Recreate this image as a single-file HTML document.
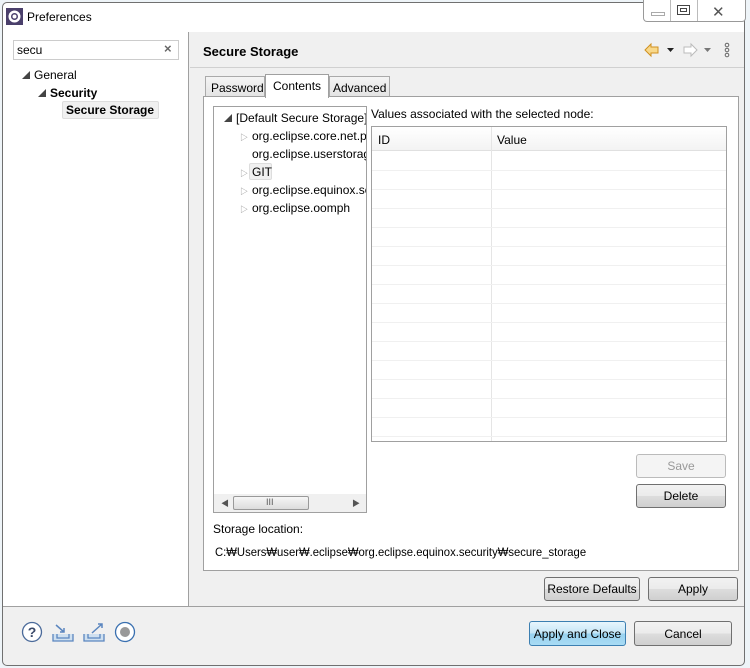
<!DOCTYPE html>
<html><head><meta charset="utf-8"><style>
*{box-sizing:border-box;margin:0;padding:0}
body{width:750px;height:668px;background:#eef4f8;font-family:"Liberation Sans","Noto Sans CJK KR",sans-serif;font-size:12px;color:#000;position:relative;overflow:hidden}
.a{position:absolute}
.btn{position:absolute;border:1px solid #707070;border-radius:3px;background:linear-gradient(#f2f2f2,#ebebeb 50%,#dddddd 51%,#cfcfcf);text-align:center;font-size:12px;line-height:22px}
.t{position:absolute;white-space:nowrap;margin-top:1px}
.row{position:absolute;left:0;right:0;height:1px;background:#f0f0f0}
</style></head><body>
<div class="a" style="left:2px;top:2px;width:743px;height:664px;background:#f0f0f0;border:1px solid #707070;border-radius:5px"></div>
<div class="a" style="left:3px;top:3px;width:741px;height:29px;background:#fff;border-radius:5px 5px 0 0"></div>
<svg class="a" style="left:6px;top:8px" width="17" height="17"><rect x="0" y="0" width="17" height="17" fill="#4a3f6b"/><circle cx="8.5" cy="8.5" r="6" fill="#fff"/><circle cx="8.5" cy="8.5" r="3.5" fill="#4a3f6b"/><circle cx="8.5" cy="8.5" r="2" fill="#fff"/></svg>
<div class="t" style="left:27px;top:9px;font-size:12px">Preferences</div>
<div class="a" style="left:643px;top:0;width:103px;height:22px;border:1px solid #999;border-top:none;border-radius:0 0 4px 4px;background:#fff"></div>
<div class="a" style="left:670px;top:0;width:1px;height:21px;background:#bbb"></div>
<div class="a" style="left:697px;top:0;width:1px;height:21px;background:#bbb"></div>
<div class="a" style="left:651px;top:12px;width:14px;height:4px;border:1px solid #aaa"></div>
<div class="a" style="left:677px;top:5px;width:13px;height:10px;border:1px solid #444"><div class="a" style="left:2px;top:2px;width:7px;height:4px;border:1px solid #444"></div></div>
<div class="t" style="left:712px;top:2px;font-size:15px;color:#555">✕</div>
<div class="a" style="left:3px;top:32px;width:186px;height:574px;background:#fff;border-right:1px solid #a0a0a0"></div>
<div class="a" style="left:13px;top:40px;width:166px;height:20px;border:1px solid #ccc;background:#fff"></div>
<div class="t" style="left:17px;top:42px">secu</div>
<div class="t" style="left:164px;top:40px;font-size:13px;color:#666;font-weight:bold">×</div>
<div class="t" style="left:22px;top:69px;font-size:8px;color:#444">◢</div>
<div class="t" style="left:34px;top:67px">General</div>
<div class="t" style="left:38px;top:87px;font-size:8px;color:#444">◢</div>
<div class="t" style="left:50px;top:85px;font-weight:bold">Security</div>
<div class="a" style="left:62px;top:101px;width:97px;height:18px;background:#f0f0f0;border:1px solid #ddd;border-radius:2px"></div>
<div class="t" style="left:66px;top:102px;font-weight:bold">Secure Storage</div>
<div class="a" style="left:190px;top:67px;width:554px;height:1px;background:#d0d0d0"></div>
<div class="t" style="left:203px;top:43px;font-size:13px;font-weight:bold">Secure Storage</div>
<svg class="a" style="left:643px;top:42px" width="95" height="16"><path d="M2 8 L8 2 V5 H15 V11 H8 V14 Z" fill="#f8d88a" stroke="#d09020"/><path d="M24 6 h7 l-3.5 4z" fill="#222"/><path d="M54 8 L48 2 V5 H41 V11 H48 V14 Z" fill="#fff" stroke="#bbb"/><path d="M61 6 h7 l-3.5 4z" fill="#777"/><circle cx="84" cy="3" r="1.8" fill="none" stroke="#666"/><circle cx="84" cy="8" r="1.8" fill="none" stroke="#666"/><circle cx="84" cy="13" r="1.8" fill="none" stroke="#666"/></svg>
<div class="a" style="left:205px;top:76px;width:60px;height:21px;border:1px solid #aaa;background:linear-gradient(#f4f4f4,#e4e4e4)"></div>
<div class="t" style="left:211px;top:80px">Password</div>
<div class="a" style="left:329px;top:76px;width:61px;height:21px;border:1px solid #aaa;background:linear-gradient(#f4f4f4,#e4e4e4)"></div>
<div class="t" style="left:333px;top:80px">Advanced</div>
<div class="a" style="left:203px;top:96px;width:536px;height:475px;border:1px solid #a0a0a0;background:#fff"></div>
<div class="a" style="left:265px;top:74px;width:64px;height:24px;border:1px solid #a0a0a0;border-bottom:none;background:#fff"></div>
<div class="t" style="left:273px;top:78px">Contents</div>
<div class="a" style="left:213px;top:106px;width:154px;height:407px;border:1px solid #a0a0a0;background:#fff;overflow:hidden">
<div class="t" style="left:10px;top:5px;font-size:8px;color:#444">◢</div>
<div class="t" style="left:22px;top:3px">[Default Secure Storage]</div>
<div class="t" style="left:26px;top:24px;font-size:8px;color:#888">▷</div>
<div class="t" style="left:38px;top:21px">org.eclipse.core.net.proxy</div>
<div class="t" style="left:38px;top:39px">org.eclipse.userstorage</div>
<div class="a" style="left:35px;top:56px;width:23px;height:17px;background:#f0f0f0;border:1px solid #ddd;border-radius:2px"></div>
<div class="t" style="left:26px;top:60px;font-size:8px;color:#888">▷</div>
<div class="t" style="left:38px;top:57px">GIT</div>
<div class="t" style="left:26px;top:78px;font-size:8px;color:#888">▷</div>
<div class="t" style="left:38px;top:75px">org.eclipse.equinox.secure</div>
<div class="t" style="left:26px;top:96px;font-size:8px;color:#888">▷</div>
<div class="t" style="left:38px;top:93px">org.eclipse.oomph</div>
<div class="a" style="left:0;top:387px;width:152px;height:18px;background:#f0f0f0"></div>
<div class="t" style="left:7px;top:390px;font-size:8px;color:#555">◀</div>
<div class="a" style="left:19px;top:389px;width:76px;height:14px;border:1px solid #999;border-radius:2px;background:linear-gradient(#f6f6f6,#dcdcdc)"></div>
<div class="t" style="left:52px;top:389px;font-size:9px;color:#555">III</div>
<div class="t" style="left:138px;top:390px;font-size:8px;color:#555">▶</div>
</div>
<div class="t" style="left:371px;top:106px">Values associated with the selected node:</div>
<div class="a" style="left:371px;top:126px;width:356px;height:316px;border:1px solid #a0a0a0;background:#fff;overflow:hidden">
<div class="a" style="left:0;top:0;width:354px;height:24px;background:linear-gradient(#fff,#f3f3f3);border-bottom:1px solid #e0e0e0"></div>
<div class="a" style="left:119px;top:0;width:1px;height:316px;background:#e5e5e5"></div>
<div class="t" style="left:6px;top:5px">ID</div>
<div class="t" style="left:125px;top:5px">Value</div>
<div class="row" style="top:43px"></div><div class="row" style="top:62px"></div><div class="row" style="top:81px"></div><div class="row" style="top:100px"></div><div class="row" style="top:119px"></div><div class="row" style="top:138px"></div><div class="row" style="top:157px"></div><div class="row" style="top:176px"></div><div class="row" style="top:195px"></div><div class="row" style="top:214px"></div><div class="row" style="top:233px"></div><div class="row" style="top:252px"></div><div class="row" style="top:271px"></div><div class="row" style="top:290px"></div><div class="row" style="top:309px"></div>
</div>
<div class="btn" style="left:636px;top:454px;width:90px;height:24px;border-color:#bbb;background:#f4f4f4;color:#999">Save</div>
<div class="btn" style="left:636px;top:484px;width:90px;height:24px">Delete</div>
<div class="t" style="left:213px;top:521px">Storage location:</div>
<div class="t" style="left:215px;top:544px;transform:scaleX(0.94);transform-origin:0 0">C:₩Users₩user₩.eclipse₩org.eclipse.equinox.security₩secure_storage</div>
<div class="btn" style="left:544px;top:577px;width:96px;height:24px">Restore Defaults</div>
<div class="btn" style="left:648px;top:577px;width:90px;height:24px">Apply</div>
<div class="a" style="left:3px;top:606px;width:741px;height:1px;background:#a0a0a0"></div>
<svg class="a" style="left:20px;top:620px" width="120" height="24"><circle cx="12" cy="12" r="9.5" fill="#fff" stroke="#4a6a9a" stroke-width="1.3"/><text x="12" y="17" font-size="14" font-weight="bold" text-anchor="middle" fill="#3a4a6a" font-family="Liberation Sans">?</text>
<path d="M33 14 v7 h20 v-7 M37 14 v4 h12 v-4" fill="#cfe0f0" stroke="#5b86bf" stroke-width="1.3"/><path d="M36 5 l8 7 M44 8 v4 h-4" stroke="#5b86bf" stroke-width="1.5" fill="none"/>
<path d="M64 14 v7 h20 v-7 M68 14 v4 h12 v-4" fill="#cfe0f0" stroke="#5b86bf" stroke-width="1.3"/><path d="M72 13 l10 -9 M78 4 h4 v4" stroke="#5b86bf" stroke-width="1.5" fill="none"/>
<circle cx="105" cy="12" r="9.5" fill="#fff" stroke="#3a70b0" stroke-width="1.3"/><circle cx="105" cy="12" r="5" fill="#999"/></svg>
<div class="btn" style="left:529px;top:621px;width:97px;height:25px;border-color:#3c7fb1;background:linear-gradient(#e8f6fd,#c4e5f6 50%,#98d1ef 51%,#a8dbf4);line-height:24px">Apply and Close</div>
<div class="btn" style="left:634px;top:621px;width:98px;height:25px;line-height:24px">Cancel</div>
</body></html>
